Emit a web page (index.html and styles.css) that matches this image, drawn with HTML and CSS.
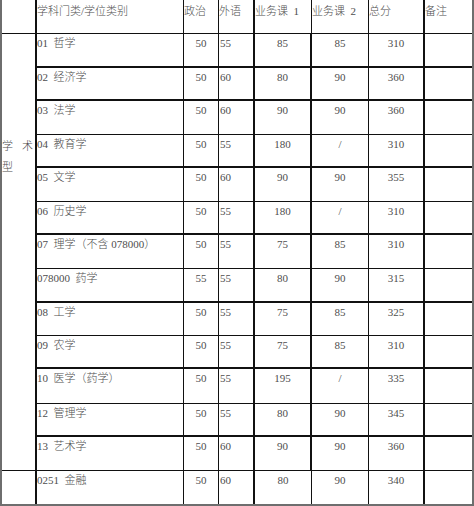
FILE: index.html
```html
<!DOCTYPE html>
<html lang="zh-CN">
<head>
<meta charset="utf-8">
<title>分数线</title>
<link rel="stylesheet" href="styles.css">
</head>
<body>
<div class="sheet">
  <div class="grid">
    <div class="row thin">
      <div class="c side"></div>
      <div class="c name">学科门类/学位类别</div>
      <div class="c h">政治</div>
      <div class="c h">外语</div>
      <div class="c h">业务课&nbsp;&nbsp;1</div>
      <div class="c h">业务课&nbsp;&nbsp;2</div>
      <div class="c h">总分</div>
      <div class="c h last">备注</div>
    </div>
    <div class="c side span"><span class="vt">学<span class="gap"></span>术</span><span class="vt">型</span></div>
    <div class="row thick">
      <div class="c name">01&nbsp;&nbsp;哲学</div><div class="c n">50</div><div class="c l">55</div><div class="c n">85</div><div class="c n">85</div><div class="c n">310</div><div class="c last"></div>
    </div>
    <div class="row thick">
      <div class="c name">02&nbsp;&nbsp;经济学</div><div class="c n">50</div><div class="c l">60</div><div class="c n">80</div><div class="c n">90</div><div class="c n">360</div><div class="c last"></div>
    </div>
    <div class="row thin">
      <div class="c name">03&nbsp;&nbsp;法学</div><div class="c n">50</div><div class="c l">60</div><div class="c n">90</div><div class="c n">90</div><div class="c n">360</div><div class="c last"></div>
    </div>
    <div class="row thick">
      <div class="c name">04&nbsp;&nbsp;教育学</div><div class="c n">50</div><div class="c l">55</div><div class="c n">180</div><div class="c n">/</div><div class="c n">310</div><div class="c last"></div>
    </div>
    <div class="row thin">
      <div class="c name">05&nbsp;&nbsp;文学</div><div class="c n">50</div><div class="c l">60</div><div class="c n">90</div><div class="c n">90</div><div class="c n">355</div><div class="c last"></div>
    </div>
    <div class="row thick">
      <div class="c name">06&nbsp;&nbsp;历史学</div><div class="c n">50</div><div class="c l">55</div><div class="c n">180</div><div class="c n">/</div><div class="c n">310</div><div class="c last"></div>
    </div>
    <div class="row thin">
      <div class="c name">07&nbsp;&nbsp;理学（不含&nbsp;078000）</div><div class="c n">50</div><div class="c l">55</div><div class="c n">75</div><div class="c n">85</div><div class="c n">310</div><div class="c last"></div>
    </div>
    <div class="row thick">
      <div class="c name">078000&nbsp;&nbsp;药学</div><div class="c n">55</div><div class="c l">55</div><div class="c n">80</div><div class="c n">90</div><div class="c n">315</div><div class="c last"></div>
    </div>
    <div class="row thin">
      <div class="c name">08&nbsp;&nbsp;工学</div><div class="c n">50</div><div class="c l">55</div><div class="c n">75</div><div class="c n">85</div><div class="c n">325</div><div class="c last"></div>
    </div>
    <div class="row thick">
      <div class="c name">09&nbsp;&nbsp;农学</div><div class="c n">50</div><div class="c l">55</div><div class="c n">75</div><div class="c n">85</div><div class="c n">310</div><div class="c last"></div>
    </div>
    <div class="row thin">
      <div class="c name">10&nbsp;&nbsp;医学（药学）</div><div class="c n">50</div><div class="c l">55</div><div class="c n">195</div><div class="c n">/</div><div class="c n">335</div><div class="c last"></div>
    </div>
    <div class="row thick">
      <div class="c name">12&nbsp;&nbsp;管理学</div><div class="c n">50</div><div class="c l">55</div><div class="c n">80</div><div class="c n">90</div><div class="c n">345</div><div class="c last"></div>
    </div>
    <div class="row thin">
      <div class="c name">13&nbsp;&nbsp;艺术学</div><div class="c n">50</div><div class="c l">60</div><div class="c n">90</div><div class="c n">90</div><div class="c n">360</div><div class="c last"></div>
    </div>
    <div class="row none">
      <div class="c side"></div>
      <div class="c name">0251&nbsp;&nbsp;金融</div><div class="c n">50</div><div class="c l">60</div><div class="c n">80</div><div class="c n">90</div><div class="c n">340</div><div class="c last"></div>
    </div>
  </div>
</div>
</body>
</html>
```
FILE: styles.css
```css
html, body {
  margin: 0;
  padding: 0;
  background: #ffffff;
}

.sheet {
  width: 474px;
  height: 506px;
  box-sizing: border-box;
  border-left: 2px solid #6e6e6e;
  border-right: 2px solid #6e6e6e;
  border-bottom: 2px solid #6e6e6e;
  background: #ffffff;
  overflow: hidden;
}

.grid {
  display: grid;
  grid-template-columns: 35px 147px 35px 36px 57px 57px 56px 47px;
  grid-template-rows: 34px 34px 33px 34px 33px 34px 33px 34px 34px 33px 33px 35px 33px 34px 33px;
  font-family: "Liberation Serif", "Noto Sans CJK SC", serif;
  font-size: 11px;
  font-weight: 300;
  line-height: 14px;
  color: #4e4e4e;
}

.row {
  display: contents;
}

.c {
  box-sizing: border-box;
  border-style: solid;
  border-color: #111111;
  border-width: 0 1px 1px 0;
  padding-top: 2px;
  white-space: nowrap;
  overflow: hidden;
}

.row.thick > .c { border-bottom-width: 2px; }
.row.thin > .c { border-bottom-width: 1px; }
.row.none > .c { border-bottom-width: 0; }

/* thick vertical rules after columns 1, 4, 6, 7 */
.c.side { border-right-width: 2px; }
.c.l, .row > .c:nth-child(4) { border-right-width: 2px; }
.row > .c.n:nth-last-child(2) { border-right-width: 2px; }
.row > .c.h:nth-child(7) { border-right-width: 2px; }
.row > .c.h:nth-child(4) { border-right-width: 2px; }
.c.last { border-right-width: 0; }

.row:first-child > .c { padding-top: 4px; }

.c.span {
  grid-row: span 13;
  border-bottom-width: 1px;
  padding-top: 102px;
  padding-left: 0;
  overflow: visible;
}

.vt {
  display: block;
  line-height: 21px;
}

.gap {
  display: inline-block;
  width: 9px;
}

.c.name { padding-left: 0; }
.c.h { padding-left: 0; }
.c.n { text-align: center; }
.c.l { padding-left: 1px; }
```
